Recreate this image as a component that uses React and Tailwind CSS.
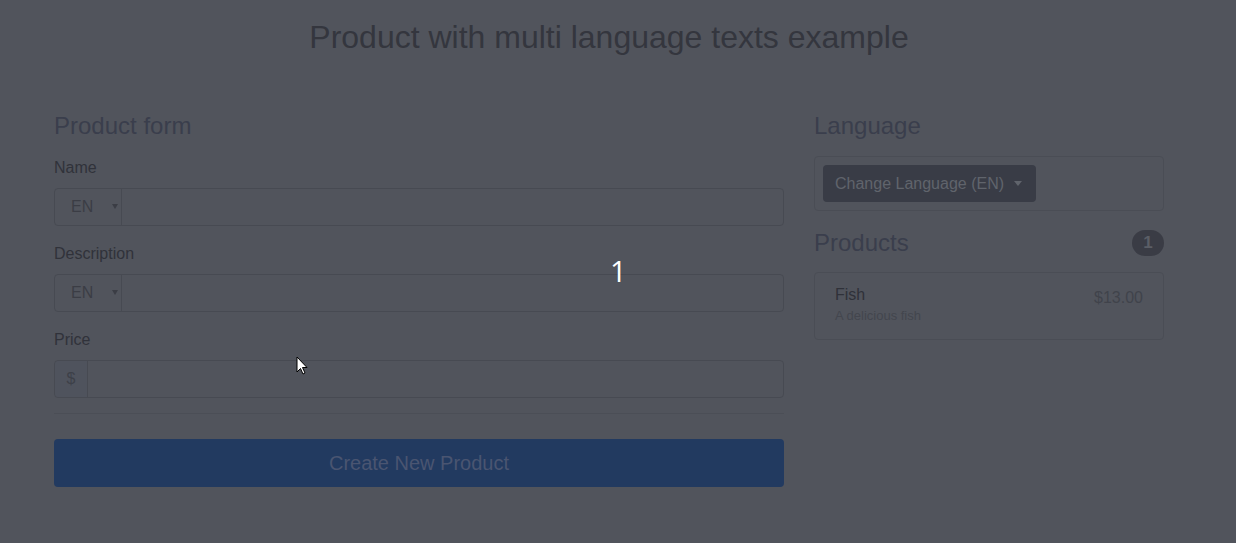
import React from 'react';

const font = { fontFamily: '"Liberation Sans", Arial, sans-serif' };

const LangInput = () => (
  <div className="flex h-[38px] border border-[#474a52] rounded-[4px]">
    <div className="w-[67px] flex items-center pl-[16px] border-r border-[#474a52] text-[16px] text-[#3b3d45] relative">
      <span>EN</span>
      <span className="absolute right-[3px] top-[15px] w-0 h-0 border-l-[3px] border-r-[3px] border-t-[5px] border-l-transparent border-r-transparent border-t-[#3b3d45]" />
    </div>
    <div className="flex-1" />
  </div>
);

export default function App() {
  return (
    <div className="relative w-[1236px] h-[543px] bg-[#51545c] overflow-hidden" style={font}>
      <div className="w-[1110px] ml-[54px]">
        <h1 className="text-center text-[32px] leading-[38px] text-[#34363e] pt-[18px]">
          Product with multi language texts example
        </h1>
        <div className="flex gap-[30px] mt-[55px]">
          <div className="w-[730px]">
            <h4 className="text-[24px] leading-[29px] text-[#3a3e4c]">Product form</h4>
            <div className="mt-[18px]">
              <label className="block text-[16px] leading-[19px] text-[#30323a] mb-[11px]">Name</label>
              <LangInput />
            </div>
            <div className="mt-[18px]">
              <label className="block text-[16px] leading-[19px] text-[#30323a] mb-[11px]">Description</label>
              <LangInput />
            </div>
            <div className="mt-[18px]">
              <label className="block text-[16px] leading-[19px] text-[#30323a] mb-[11px]">Price</label>
              <div className="flex h-[38px] border border-[#474a52] rounded-[4px]">
                <div className="w-[33px] flex items-center justify-center bg-[#4f535d] border-r border-[#474a52] rounded-l-[4px] text-[16px] text-[#3d4048]">$</div>
                <div className="flex-1" />
              </div>
            </div>
            <div className="mt-[15px] border-t border-[#4b4e56]" />
            <button className="mt-[25px] w-full h-[48px] rounded-[4px] bg-[#223a60] text-[20px] text-[#4a5571]">
              Create New Product
            </button>
          </div>
          <div className="w-[350px]">
            <h4 className="text-[24px] leading-[29px] text-[#3a3e4c]">Language</h4>
            <div className="mt-[16px] h-[55px] border border-[#4a4d55] rounded-[4px] px-[8px] pt-[8px]">
              <button className="h-[37px] pl-[12px] pr-[14px] rounded-[4px] bg-[#393c46] text-[16px] text-[#60646c] flex items-center">
                Change Language (EN)
                <span className="ml-[10px] w-0 h-0 border-l-[4px] border-r-[4px] border-t-[5px] border-l-transparent border-r-transparent border-t-[#60646c]" />
              </button>
            </div>
            <div className="mt-[17px] flex items-center justify-between">
              <h4 className="text-[24px] leading-[29px] text-[#3a3e4c]">Products</h4>
              <span className="h-[26px] min-w-[32px] px-[10px] rounded-full bg-[#3a3c45] text-[#5b5e66] text-[17px] font-bold flex items-center justify-center">1</span>
            </div>
            <div className="mt-[15px] h-[68px] border border-[#4a4d55] rounded-[4px] px-[20px] pt-[12px] flex justify-between">
              <div>
                <div className="text-[16px] leading-[19px] text-[#2f3139]">Fish</div>
                <div className="mt-[4px] text-[13px] leading-[15px] text-[#43464e]">A delicious fish</div>
              </div>
              <div className="text-[16px] leading-[19px] text-[#40434b] mt-[3px]">$13.00</div>
            </div>
          </div>
        </div>
      </div>
      <div className="absolute left-[610px] top-[254px] text-[29px] leading-[34px] text-white" style={{ fontFamily: '"Open Sans", sans-serif' }}>1</div>
      <svg className="absolute left-[296px] top-[356px]" width="12" height="20" viewBox="0 0 12 20">
        <path d="M1 1 L1 16 L4.5 12.5 L7 18 L9 17 L6.5 11.5 L11 11.5 Z" fill="#fff" stroke="#000" strokeWidth="1" />
      </svg>
    </div>
  );
}
